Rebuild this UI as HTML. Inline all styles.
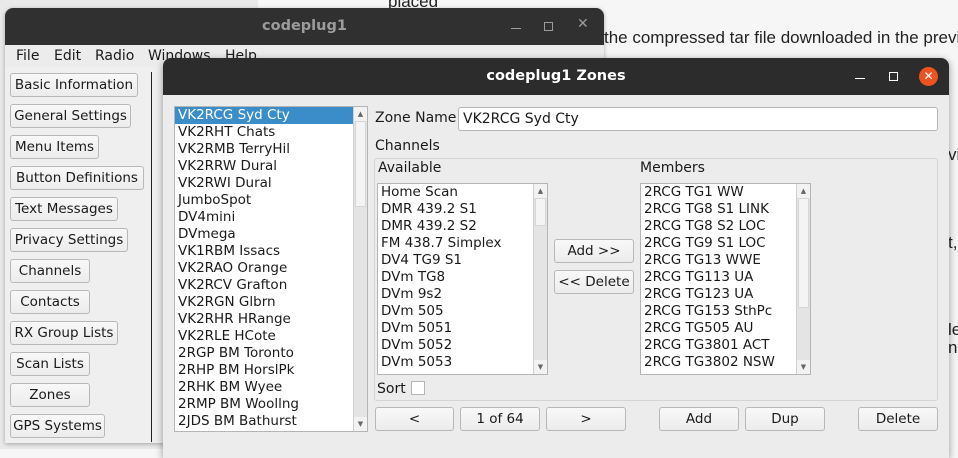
<!DOCTYPE html>
<html><head><meta charset="utf-8"><style>
*{box-sizing:border-box;margin:0;padding:0}
body{width:958px;height:449px;overflow:hidden;position:relative;background:#f6f6f6;font-family:"DejaVu Sans","Liberation Sans",sans-serif;font-size:13px;color:#1a1a1a}
.a{position:absolute}
.btn{position:absolute;height:24px;border:1px solid #b8b8b8;border-radius:3px;background:linear-gradient(#f8f8f8,#ececec);text-align:center;line-height:22px;font-size:13.5px;white-space:nowrap}
.list{position:absolute;background:#fff;border:1px solid #b5b5b5;overflow:hidden}
.list .r{height:17px;line-height:17px;padding-left:3px;font-size:13.5px;white-space:nowrap}
.sb{position:absolute;right:0;top:0;bottom:0;width:14px;background:#e4e4e4;border-left:1px solid #d0d0d0}
.sb .th{position:absolute;left:1px;right:1px;background:#f4f4f4;border:1px solid #d6d6d6}
.up,.dn{position:absolute;left:0;right:0;height:14px;background:#f2f2f2;font-size:7px;color:#666;text-align:center;line-height:14px}
.up{top:0}.dn{bottom:0}
.doc{position:absolute;font-family:"Liberation Sans",sans-serif;font-size:17px;color:#222;white-space:nowrap}
</style></head><body>
<div class="a" style="left:0;top:0;width:258px;height:449px;background:#e9e9e9"></div>
<div class="doc" style="left:388px;top:-8px">placed</div>
<div class="doc" style="left:604px;top:28px">the compressed tar file downloaded in the previous</div>
<div class="doc" style="left:948px;top:145px">vil</div>
<div class="doc" style="left:948px;top:233px">t,</div>
<div class="doc" style="left:948px;top:320px">le</div>
<div class="doc" style="left:948px;top:338px">n t</div>

<div class="a" style="left:5px;top:8px;width:599px;height:435px;background:#efefef;border-radius:8px 8px 0 0;overflow:hidden;box-shadow:0 1px 4px rgba(0,0,0,.3)">
 <div class="a" style="left:0;top:0;width:599px;height:37px;background:#303030;color:#9c9c9c;font-weight:bold;font-size:14.5px;text-align:center;line-height:37px">codeplug1</div>
 <div class="a" style="left:506px;top:20px;width:10px;height:1px;background:#9c9c9c"></div>
 <div class="a" style="left:539px;top:14px;width:9px;height:9px;border:1px solid #9c9c9c"></div>
 <div class="a" style="left:572px;top:8px;color:#9c9c9c;font-size:14px">✕</div>
 <div class="a" style="left:0;top:37px;width:599px;height:22px;background:#ececec;font-size:14px;line-height:22px">
  <span class="a" style="left:11px">File</span><span class="a" style="left:49px">Edit</span><span class="a" style="left:90px">Radio</span><span class="a" style="left:143px">Windows</span><span class="a" style="left:220px">Help</span>
 </div>
 <div class="a" style="left:146px;top:64px;width:1px;height:370px;background:#222"></div>
</div>
<div class="btn" style="left:10px;top:73px;width:128px">Basic Information</div>
<div class="btn" style="left:10px;top:104px;width:121px">General Settings</div>
<div class="btn" style="left:10px;top:135px;width:89px">Menu Items</div>
<div class="btn" style="left:10px;top:166px;width:134px">Button Definitions</div>
<div class="btn" style="left:10px;top:197px;width:108px">Text Messages</div>
<div class="btn" style="left:10px;top:228px;width:118px">Privacy Settings</div>
<div class="btn" style="left:10px;top:259px;width:80px">Channels</div>
<div class="btn" style="left:10px;top:290px;width:80px">Contacts</div>
<div class="btn" style="left:10px;top:321px;width:108px">RX Group Lists</div>
<div class="btn" style="left:10px;top:352px;width:80px">Scan Lists</div>
<div class="btn" style="left:10px;top:383px;width:80px">Zones</div>
<div class="btn" style="left:10px;top:414px;width:95px">GPS Systems</div>

<div class="a" style="left:163px;top:58px;width:786px;height:400px;background:#ececec;border-radius:8px 8px 0 0;overflow:hidden;box-shadow:0 2px 8px rgba(0,0,0,.4)">
 <div class="a" style="left:0;top:0;width:786px;height:37px;background:#2c2c2c;color:#fff;font-weight:bold;font-size:14.5px;text-align:center;line-height:37px">codeplug1 Zones</div>
 <div class="a" style="left:692px;top:20px;width:10px;height:1px;background:#fff"></div>
 <div class="a" style="left:726px;top:14px;width:9px;height:9px;border:1px solid #fff"></div>
 <div class="a" style="left:756px;top:9px;width:19px;height:19px;border-radius:50%;background:#e95420;color:#fff;font-size:12px;text-align:center;line-height:19px">✕</div>
</div>

<div class="list" style="left:174px;top:106px;width:194px;height:326px">
 <div class="r" style="background:#3a8dc9;color:#fff;margin-right:14px">VK2RCG Syd Cty</div>
 <div class="r">VK2RHT Chats</div><div class="r">VK2RMB TerryHil</div><div class="r">VK2RRW Dural</div><div class="r">VK2RWI Dural</div><div class="r">JumboSpot</div><div class="r">DV4mini</div><div class="r">DVmega</div><div class="r">VK1RBM Issacs</div><div class="r">VK2RAO Orange</div><div class="r">VK2RCV Grafton</div><div class="r">VK2RGN Glbrn</div><div class="r">VK2RHR HRange</div><div class="r">VK2RLE HCote</div><div class="r">2RGP BM Toronto</div><div class="r">2RHP BM HorslPk</div><div class="r">2RHK BM Wyee</div><div class="r">2RMP BM Woollng</div><div class="r">2JDS BM Bathurst</div>
 <div class="sb"><div class="up">▲</div><div class="th" style="top:14px;height:86px"></div><div class="dn">▼</div></div>
</div>

<div class="a" style="left:375px;top:110px;font-size:14px">Zone Name</div>
<div class="a" style="left:458px;top:107px;width:480px;height:24px;background:#fff;border:1px solid #b5b5b5;border-radius:3px;font-size:14px;line-height:22px;padding-left:4px">VK2RCG Syd Cty</div>
<div class="a" style="left:375px;top:138px;font-size:14px">Channels</div>
<div class="a" style="left:374px;top:158px;width:564px;height:243px;border:1px solid #d4d4d4;border-radius:3px"></div>
<div class="a" style="left:378px;top:160px;font-size:14px">Available</div>
<div class="a" style="left:640px;top:160px;font-size:14px">Members</div>

<div class="list" style="left:377px;top:183px;width:171px;height:192px">
 <div class="r">Home Scan</div><div class="r">DMR 439.2 S1</div><div class="r">DMR 439.2 S2</div><div class="r">FM 438.7 Simplex</div><div class="r">DV4 TG9 S1</div><div class="r">DVm TG8</div><div class="r">DVm 9s2</div><div class="r">DVm 505</div><div class="r">DVm 5051</div><div class="r">DVm 5052</div><div class="r">DVm 5053</div>
 <div class="sb"><div class="up">▲</div><div class="th" style="top:14px;height:28px"></div><div class="dn">▼</div></div>
</div>
<div class="list" style="left:640px;top:183px;width:171px;height:192px">
 <div class="r">2RCG TG1 WW</div><div class="r">2RCG TG8 S1 LINK</div><div class="r">2RCG TG8 S2 LOC</div><div class="r">2RCG TG9 S1 LOC</div><div class="r">2RCG TG13 WWE</div><div class="r">2RCG TG113 UA</div><div class="r">2RCG TG123 UA</div><div class="r">2RCG TG153 SthPc</div><div class="r">2RCG TG505 AU</div><div class="r">2RCG TG3801 ACT</div><div class="r">2RCG TG3802 NSW</div>
 <div class="sb"><div class="up">▲</div><div class="th" style="top:14px;height:110px"></div><div class="dn">▼</div></div>
</div>
<div class="btn" style="left:554px;top:239px;width:80px">Add &gt;&gt;</div>
<div class="btn" style="left:554px;top:270px;width:80px">&lt;&lt; Delete</div>
<div class="a" style="left:377px;top:381px;font-size:14px">Sort</div>
<div class="a" style="left:411px;top:381px;width:14px;height:14px;background:#fff;border:1px solid #b5b5b5"></div>

<div class="btn" style="left:375px;top:407px;width:79px">&lt;</div>
<div class="btn" style="left:460px;top:407px;width:80px">1 of 64</div>
<div class="btn" style="left:546px;top:407px;width:80px">&gt;</div>
<div class="btn" style="left:659px;top:407px;width:80px">Add</div>
<div class="btn" style="left:745px;top:407px;width:80px">Dup</div>
<div class="btn" style="left:858px;top:407px;width:80px">Delete</div>
</body></html>
